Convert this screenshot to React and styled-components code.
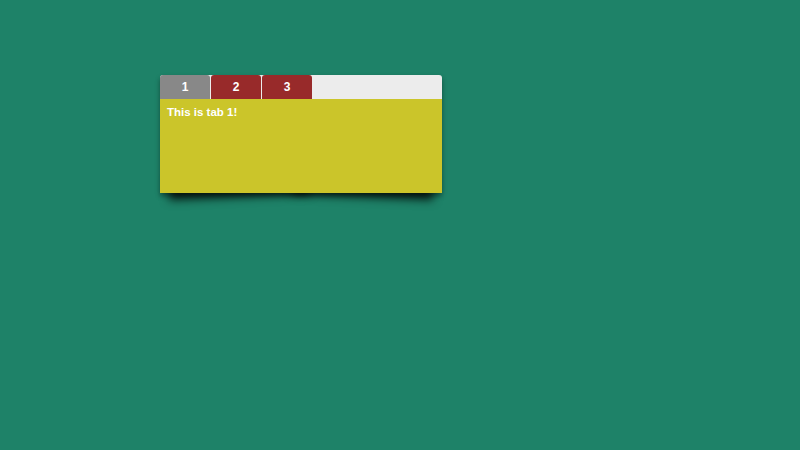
import React, { useState } from 'react';
import styled, { createGlobalStyle } from 'styled-components';

const GlobalStyle = createGlobalStyle`
    html, body {
        margin: 0;
        padding: 0;
        background: #1e8268;
        font-family: "Liberation Sans", Arial, sans-serif;
    }
`;

const Page = styled.div`
    width: 800px;
    height: 450px;
    padding: 75px 0 0 160px;
    box-sizing: border-box;
`;

const Card = styled.div`
    position: relative;
    isolation: isolate;
    width: 282px;
    box-shadow: 0 3px 5px rgba(0, 0, 0, 0.4);
    border-radius: 3px 3px 0 0;

    &::before,
    &::after {
        content: '';
        position: absolute;
        z-index: -1;
        bottom: 12px;
        width: 50%;
        height: 20px;
        box-shadow: 0 16px 10px rgba(0, 0, 0, 0.8);
    }

    &::before {
        left: 8px;
        transform: rotate(-2.5deg);
    }

    &::after {
        right: 8px;
        transform: rotate(2.5deg);
    }
`;

const TabBar = styled.div`
    display: flex;
    gap: 1px;
    height: 24px;
    background: #ececec;
    border-radius: 3px 3px 0 0;
    overflow: hidden;
`;

const Tab = styled.button`
    width: 50px;
    height: 24px;
    padding: 0;
    border: none;
    border-radius: 3px 3px 0 0;
    background: ${props => props.active ? '#888888' : '#982a2a'};
    color: #fff;
    font-family: "Liberation Sans", Arial, sans-serif;
    font-size: 12px;
    font-weight: 700;
    cursor: pointer;

    &:first-child {
        border-top-left-radius: 0;
    }

    &:focus {
        outline: 0;
    }
`;

const Content = styled.div`
    height: 94px;
    padding: 6px 7px;
    box-sizing: border-box;
    background: #cbc52a;
    color: #fff;
    font-size: 11.5px;
    line-height: 14px;
    font-weight: 700;
`;

const tabs = [1, 2, 3];

const App = () => {
    const [current, setCurrent] = useState(1);

    return (
        <>
            <GlobalStyle />
            <Page>
                <Card>
                    <TabBar>
                        {tabs.map(t => (
                            <Tab key={t} active={current === t} onClick={() => setCurrent(t)}>{t}</Tab>
                        ))}
                    </TabBar>
                    <Content>This is tab {current}!</Content>
                </Card>
            </Page>
        </>
    );
};

export default App;
